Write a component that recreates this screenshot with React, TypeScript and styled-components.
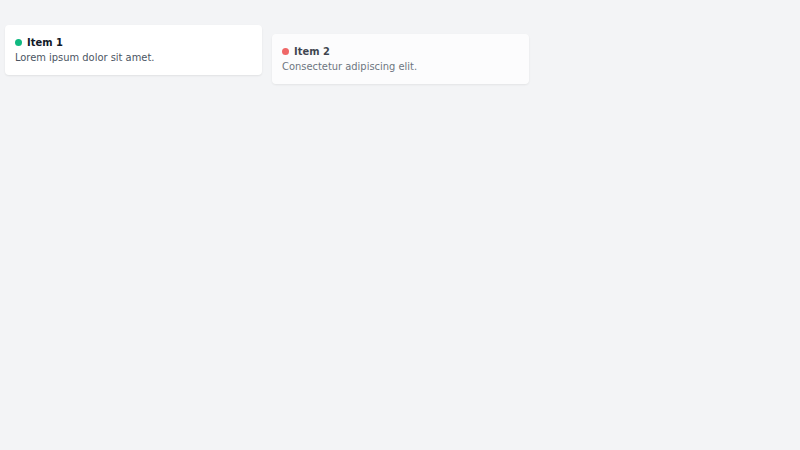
import styled, { createGlobalStyle } from 'styled-components'

const GlobalStyle = createGlobalStyle`
  html, body {
    margin: 0;
    padding: 0;
    background: #f3f4f6;
    font-family: "DejaVu Sans Condensed", "DejaVu Sans", sans-serif;
  }
`

const Board = styled.div`
  display: flex;
  align-items: flex-start;
  gap: 10px;
  padding: 25px 5px;
`

const Card = styled.div<{ $faded?: boolean; $offset?: number }>`
  width: 257px;
  box-sizing: border-box;
  padding: 10px;
  background: #fff;
  border-radius: 4px;
  box-shadow: 0 1px 2px rgba(0, 0, 0, 0.08);
  margin-top: ${(p) => p.$offset ?? 0}px;
  opacity: ${(p) => (p.$faded ? 0.8 : 1)};
`

const Title = styled.div`
  display: flex;
  align-items: center;
  gap: 5px;
  font-size: 11px;
  font-weight: bold;
  color: #111827;
  line-height: 15px;
`

const Dot = styled.span<{ $color: string }>`
  width: 7px;
  height: 7px;
  border-radius: 50%;
  background: ${(p) => p.$color};
`

const Text = styled.p`
  margin: 0;
  font-size: 11px;
  line-height: 15px;
  color: #4b5563;
`

const items = [
  { title: 'Item 1', text: 'Lorem ipsum dolor sit amet.', color: '#10b981', faded: false, offset: 0 },
  { title: 'Item 2', text: 'Consectetur adipiscing elit.', color: '#ef4444', faded: true, offset: 9 },
]

export default function App() {
  return (
    <>
      <GlobalStyle />
      <Board>
        {items.map((item) => (
          <Card key={item.title} $faded={item.faded} $offset={item.offset}>
            <Title>
              <Dot $color={item.color} />
              {item.title}
            </Title>
            <Text>{item.text}</Text>
          </Card>
        ))}
      </Board>
    </>
  )
}
